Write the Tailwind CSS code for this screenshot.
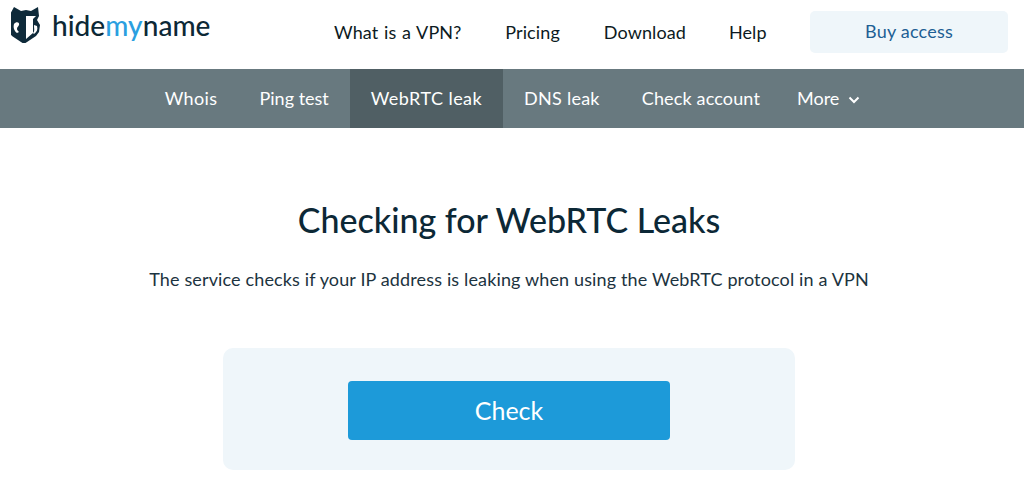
<!DOCTYPE html>
<html>
<head>
<meta charset="utf-8">
<script src="https://cdn.jsdelivr.net/npm/@tailwindcss/browser@4"></script>
</head>
<body class="bg-white font-['Lato',sans-serif] text-[#0c2836] overflow-hidden">
<header class="h-[69px] flex items-start relative">
  <div class="flex items-start w-[334px] pl-[11px] pt-[7px] shrink-0">
    <svg class="w-[30px] h-[36px] shrink-0" viewBox="0 0 30 36">
      <path fill="#0e2a3a" d="M3 0l7 4 5-1 5 1 7-4 1 9-2 4 3 5-1 7-3 4-12 8-12-8-3-4-1-7 3-5-2-4z"/>
      <path fill="#fff" d="M15 9h10l-2 2-1 1v14l-7 6z"/>
      <path fill="#fff" d="M3 17c2-3 6-2 5 1-1 2-2 2-2 4 0 1 1 2 2 3l-2 1c-3-2-4-6-3-9zM23 18l3 1c1 3 0 6-3 8l-1-1c2-2 1-4 1-8z"/>
    </svg>
    <div class="ml-[11px] mt-[3px] text-[28px] leading-[30px] font-medium tracking-[0.05px]">hide<span class="text-[#2b9fe0]">my</span>name</div>
  </div>
  <nav class="flex items-center h-[64px] text-[18px] tracking-[0.1px] [word-spacing:1px] text-[#0c1a22]">
    <a class="mr-[44px]">What is a VPN?</a>
    <a class="mr-[44px]">Pricing</a>
    <a class="mr-[43px]">Download</a>
    <a>Help</a>
  </nav>
  <a class="absolute left-[810px] top-[11px] w-[198px] h-[42px] rounded-[5px] bg-[#eff6fa] flex items-center justify-center text-[18px] tracking-[0.2px] leading-[40px] pb-[2px] text-[#1d5f94]">Buy access</a>
</header>
<nav class="h-[59px] bg-[#68797f] flex justify-center text-white text-[18px]">
  <a class="px-[21px] flex items-center tracking-[0.4px]">Whois</a>
  <a class="px-[21px] flex items-center">Ping test</a>
  <a class="px-[21px] flex items-center bg-[#505f64] tracking-[0.45px]">WebRTC leak</a>
  <a class="px-[21px] flex items-center tracking-[0.25px]">DNS leak</a>
  <a class="px-[21px] flex items-center tracking-[0.15px]">Check account</a>
  <a class="pl-[16px] pr-[20px] flex items-center">More
    <svg class="ml-[9px] mt-[3px] w-[12px] h-[8px]" viewBox="0 0 12 8" fill="none" stroke="#fff" stroke-width="2"><path d="M1.5 1.5L6 6l4.5-4.5"/></svg>
  </a>
</nav>
<main class="flex flex-col items-center pr-[6px]">
  <h1 class="mt-[70px] text-[34px] leading-[44px] font-medium">Checking for WebRTC Leaks</h1>
  <p class="mt-[24px] text-[18px] leading-[26px] tracking-[0.14px] text-[#1c3340]">The service checks if your IP address is leaking when using the WebRTC protocol in a VPN</p>
  <section class="mt-[56px] w-[572px] h-[122px] rounded-[10px] bg-[#eff6fa] flex items-start justify-center pt-[33px]">
    <button class="w-[322px] h-[59px] rounded-[4px] bg-[#1d9ad9] text-white text-[25px]">Check</button>
  </section>
</main>
</body>
</html>
